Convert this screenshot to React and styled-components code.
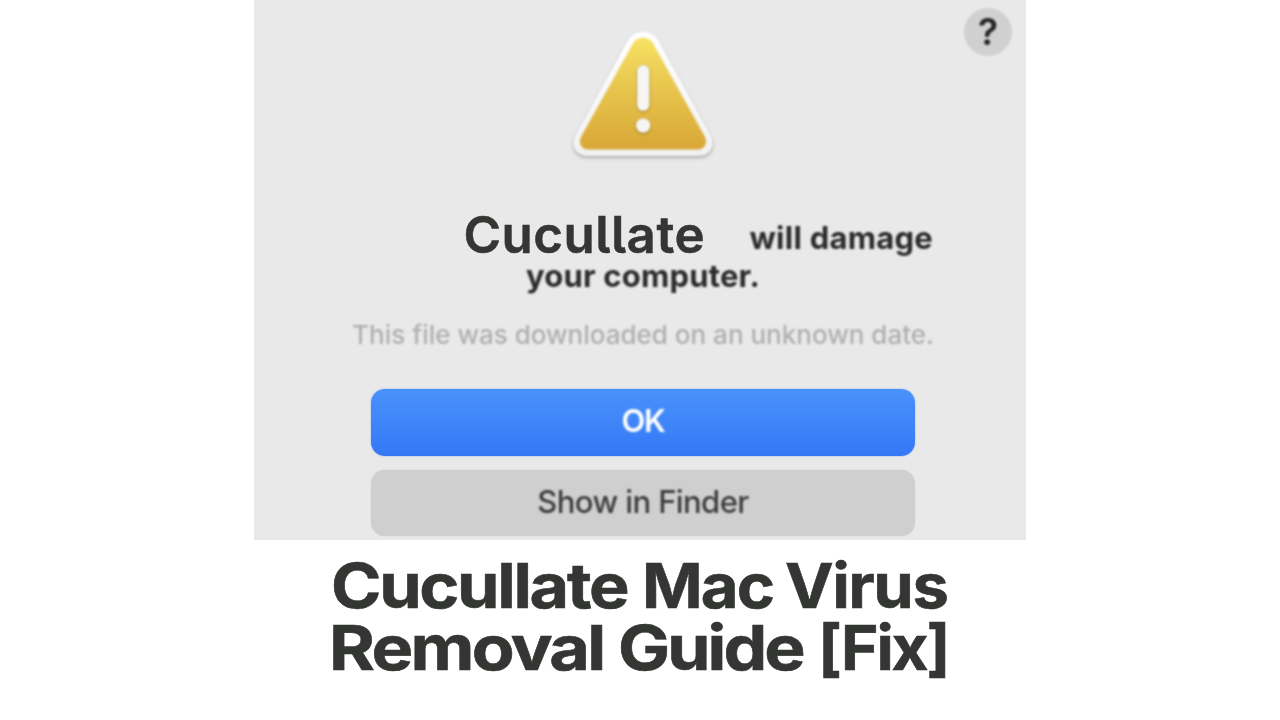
import React from 'react'
import styled, { createGlobalStyle } from 'styled-components'

const titleLines = [
    [
        { text: 'Cucullate', width: 311, stretch: 1.1, spacing: -2.1 },
        { text: 'Mac', width: 143.7, stretch: 1.05, spacing: -1.7 },
        { text: 'Virus', width: 165, stretch: 1.05, spacing: -1.4 },
    ],
    [
        { text: 'Removal', width: 289.8, stretch: 1.13, spacing: -2.4 },
        { text: 'Guide', width: 199.7, stretch: 1.12, spacing: -2.6 },
        { text: '[Fix]', width: 132, stretch: 1.03, spacing: -2.1 },
    ],
]

const WarningIcon = () => (
    <svg width="156" height="148" viewBox="565 20 156 148">
        <defs>
            <linearGradient id="yellow" x1="0" y1="0" x2="0" y2="1">
                <stop offset="0" stopColor="#f7e163" />
                <stop offset="0.5" stopColor="#e6c34c" />
                <stop offset="1" stopColor="#d9a737" />
            </linearGradient>
            <linearGradient id="rim" x1="0" y1="0" x2="0" y2="1">
                <stop offset="0" stopColor="#ffffff" />
                <stop offset="1" stopColor="#f1f1f1" />
            </linearGradient>
        </defs>
        <g className="sign">
            <path fill="url(#rim)" d="M627.500 40C634 28.500 652 28.500 658.500 40L710.500 134C717 146 710 156 698 156H588C576 156 569 146 575.500 134Z" />
            <path fill="url(#yellow)" d="M633.500 42.500C637.500 36 648.500 36 652.500 42.500L704.500 136C708.500 143 704.500 149.500 697.500 149.500H588.500C581.500 149.500 577.500 143 581.500 136Z" />
        </g>
        <g className="mark" fill="#f6f5f2">
            <rect x="637" y="65" width="12.500" height="46" rx="6.200" />
            <circle cx="643.200" cy="125.500" r="7.300" />
        </g>
    </svg>
)

const App = () => {
    return (
        <Wrapper>
            <GlobalStyle />
            <Dialog>
                <HelpButton>?</HelpButton>
                <IconHolder><WarningIcon /></IconHolder>
                <Headline>
                    <ThreatName>Cucullate</ThreatName>
                    <Phrase>will damage</Phrase>
                </Headline>
                <SecondLine>your computer.</SecondLine>
                <Note>This file was downloaded on an unknown date.</Note>
                <Actions>
                    <Button $primary><span>OK</span></Button>
                    <Button><span>Show in Finder</span></Button>
                </Actions>
            </Dialog>
            <Title>
                {titleLines.map((line, i) => (
                    <TitleLine key={i} $indent={i === 0 ? 330.8 : 328.5}>
                        {line.map(({ text, width, stretch, spacing }) => (
                            <Word key={text} $width={width} $stretch={stretch} $spacing={spacing}>{text}</Word>
                        ))}
                    </TitleLine>
                ))}
            </Title>
        </Wrapper>
    )
}

const GlobalStyle = createGlobalStyle`
    * {
        box-sizing: border-box;
    }
    body {
        margin: 0;
        background: #fff;
    }
`
const Wrapper = styled.main`
    width: 1280px;
    height: 720px;
    overflow: hidden;
    background: #fff;
    font-family: Inter, 'Liberation Sans', sans-serif;
    white-space: nowrap;
`
const Dialog = styled.section`
    position: relative;
    width: 772px;
    height: 540px;
    margin-left: 254px;
    background: #e9e9e9;
    display: flex;
    flex-direction: column;
    padding-left: 6px;
`
const HelpButton = styled.button`
    position: absolute;
    top: 8px;
    right: 14px;
    width: 48px;
    height: 48px;
    padding: 0;
    border: none;
    border-radius: 50%;
    background: #d0d0d0;
    color: #262626;
    font-family: inherit;
    font-size: 37px;
    font-weight: 600;
    line-height: 46px;
    text-align: center;
    filter: blur(0.8px);
`
const IconHolder = styled.div`
    height: 205px;
    padding-top: 20px;
    display: flex;
    justify-content: center;
    .sign {
        filter: blur(0.8px) drop-shadow(0px 2px 1.5px rgba(0,0,0,0.25));
    }
    .mark {
        filter: blur(0.8px) drop-shadow(0px 1px 1px rgba(110,80,0,0.5));
    }
`
const Headline = styled.div`
    height: 60px;
    padding-left: 203.5px;
    display: flex;
    align-items: center;
`
const ThreatName = styled.span`
    width: 286px;
    color: #343633;
    font-size: 51px;
    font-weight: 600;
    line-height: 60px;
    letter-spacing: 0.5px;
    font-feature-settings: 'cv05';
    -webkit-text-stroke: 0.5px #343633;
`
const Phrase = styled.span`
    padding-top: 4px;
    color: #2b2b2b;
    font-size: 31px;
    font-weight: 700;
    letter-spacing: 0.25px;
    filter: blur(0.8px);
`
const SecondLine = styled.div`
    height: 22px;
    line-height: 22px;
    color: #2b2b2b;
    font-size: 31px;
    font-weight: 700;
    letter-spacing: 0.2px;
    text-align: center;
    filter: blur(0.8px);
`
const Note = styled.p`
    margin: 32px 0 39px;
    line-height: 31px;
    color: #b0b0b0;
    font-size: 26px;
    font-weight: 500;
    text-align: center;
    filter: blur(0.8px);
`
const Actions = styled.div`
    display: flex;
    flex-direction: column;
    align-items: center;
    gap: 14px;
`
const Button = styled.button`
    width: 544px;
    height: ${({ $primary }) => ($primary ? '67px' : '66px')};
    padding: 0 0 4px;
    border: none;
    border-radius: 14px;
    background: ${({ $primary }) => ($primary ? 'linear-gradient(#4a92fb, #3478f6)' : '#cfcfcf')};
    color: ${({ $primary }) => ($primary ? '#fff' : '#3c3c3c')};
    box-shadow: 0px 0px 1.5px ${({ $primary }) => ($primary ? 'rgba(52,120,246,0.7)' : 'rgba(0,0,0,0.12)')};
    font-family: inherit;
    font-size: 31px;
    font-weight: ${({ $primary }) => ($primary ? 600 : 500)};
    letter-spacing: ${({ $primary }) => ($primary ? '-1.2px' : '-0.6px')};
    span {
        display: block;
        filter: blur(0.8px);
    }
`
const Title = styled.h1`
    margin: 0;
    padding-top: 15px;
    color: #343633;
    font-size: 62px;
    font-weight: 700;
    -webkit-text-stroke: 0.6px #343633;
`
const TitleLine = styled.div`
    height: 61.5px;
    line-height: 61.5px;
    padding-left: ${({ $indent }) => $indent}px;
    display: flex;
`
const Word = styled.span`
    flex: none;
    width: ${({ $width }) => $width}px;
    letter-spacing: ${({ $spacing }) => $spacing}px;
    transform: scaleX(${({ $stretch }) => $stretch});
    transform-origin: left;
`
export default App
